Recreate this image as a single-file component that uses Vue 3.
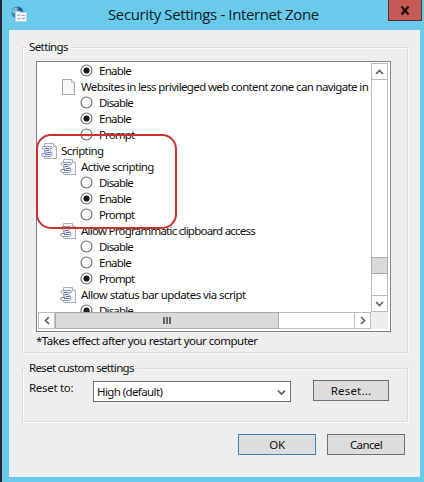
<template>
  <div class="window">
    <header class="titlebar">
      <svg class="app-icon" width="17" height="17" viewBox="0 0 17 17">
        <circle cx="6.500" cy="6.500" r="6" fill="#3c7ba2" />
        <path d="M1 5L3 2L6 1.500L6.500 4L4 6.500L2 8Z" fill="#8bbccb" />
        <path d="M8 1L11 3L10 5L8 4Z" fill="#1f5480" />
        <path d="M4.500 5.500H9L10 6.500H15.500V15.500H4.500Z" fill="#f0f6fa" stroke="#b5d3e3" />
        <path d="M6.500 9L7.500 10L9 8.200M6.500 12.500L7.500 13.500L9 11.700" fill="none" stroke="#5b8fbd" />
        <path d="M10.500 9.500H14M10.500 12.500H14" stroke="#94abba" />
      </svg>
      <h1>Security Settings - Internet Zone</h1>
      <button class="close" aria-label="Close">
        <svg width="10" height="9" viewBox="0 0 10 9">
          <path d="M1.500 0.500L8.500 8.500M8.500 0.500L1.500 8.500" stroke="#1b0b0b" stroke-width="2.200" />
        </svg>
      </button>
    </header>

    <main class="client">
      <section class="group settings">
        <h2><span class="t-settings">Settings</span></h2>
        <div class="listbox">
          <div class="view">
            <div v-for="(row, i) in rows" :key="i" class="row" :class="row.type">
              <svg v-if="row.type === 'option'" class="radio" width="13" height="13" viewBox="0 0 13 13">
                <circle cx="6.500" cy="6.500" r="5.500" fill="#fff" stroke="#6c6c6c" stroke-width="1.100" />
                <circle v-if="selected[row.group] === row.text" cx="6.500" cy="6.500" r="3.100" fill="#1c1c1c" />
              </svg>
              <svg v-else-if="row.type === 'page'" class="icon" width="14" height="16" viewBox="0 0 14 16">
                <path d="M0.500 0.500H9.500L12.500 3.500V15.500H0.500Z" fill="#f8f8f8" stroke="#a3a3a3" />
                <path d="M9.500 0.500V3.500H12.500" fill="#fff" stroke="#b8b8b8" />
              </svg>
              <svg v-else class="icon" width="16" height="16" viewBox="0 0 16 16">
                <path d="M3.500 0.500H12.500L15.500 3.500V15.500H3.500Z" fill="#f7f7f7" stroke="#b0b0b0" />
                <path d="M12.500 0.500V3.500H15.500" fill="#fff" stroke="#b0b0b0" />
                <path d="M3 3.500C0.500 3.500 0.500 6 2.500 6.500C4 8 4.500 9 5 10.500H1C0 12.500 1.500 13.500 3 13.500H9.500C11.500 13 11 10.500 10 9C8.500 7.500 8 6.500 9.500 5.500H11C11.500 4 10.500 3.500 10 3.500Z" fill="#e9edf7" stroke="#8590ae" stroke-width="0.900" />
                <path d="M3.500 5.500H8M4.500 7.500H8M6 9.500H9.500M4 11.500H9.500" stroke="#4a66a8" stroke-width="0.900" />
              </svg>
              <button v-if="row.type === 'option'" @click="selected[row.group] = row.text">
                <span :class="row.cls">{{ row.text }}</span>
              </button>
              <span v-else :class="row.cls">{{ row.text }}</span>
            </div>
          </div>
          <div class="vscroll">
            <span class="arrow"><svg width="9" height="6" viewBox="0 0 9 6"><path d="M1 5L4.500 1.500L8 5" /></svg></span>
            <span class="v-track"></span>
            <span class="v-thumb"></span>
            <span class="v-rest"></span>
            <span class="arrow"><svg width="9" height="6" viewBox="0 0 9 6"><path d="M1 1L4.500 4.500L8 1" /></svg></span>
          </div>
          <div class="hscroll">
            <span class="arrow"><svg width="6" height="9" viewBox="0 0 6 9"><path d="M5 1L1.500 4.500L5 8" /></svg></span>
            <span class="h-thumb"><i></i><i></i><i></i></span>
            <span class="h-track"></span>
            <span class="arrow"><svg width="6" height="9" viewBox="0 0 6 9"><path d="M1 1L4.500 4.500L1 8" /></svg></span>
          </div>
          <span class="corner"></span>
        </div>
        <p class="note"><span class="t-note">*Takes effect after you restart your computer</span></p>
        <div class="marker"></div>
      </section>

      <section class="group reset">
        <h2><span class="t-custom">Reset custom settings</span></h2>
        <div class="reset-row">
          <label><span class="t-to">Reset to:</span></label>
          <div class="select">
            <span class="t-high">High (default)</span>
            <svg width="9" height="7" viewBox="0 0 9 7"><path d="M1 1.500L4.500 5L8 1.500" /></svg>
          </div>
          <button class="btn"><span class="t-reset">Reset...</span></button>
        </div>
      </section>

      <footer>
        <button class="btn ok">OK</button>
        <button class="btn"><span class="t-cancel">Cancel</span></button>
      </footer>
    </main>
  </div>
</template>

<script setup>
import { reactive } from 'vue';

const option = (text, group) => ({
  type: 'option',
  text,
  group,
  cls: 't-' + text.toLowerCase(),
});

const rows = [
  option('Enable', 'first'),
  { type: 'page', text: 'Websites in less privileged web content zone can navigate in', cls: 't-websites' },
  option('Disable', 'websites'),
  option('Enable', 'websites'),
  option('Prompt', 'websites'),
  { type: 'category', text: 'Scripting', cls: 't-scripting' },
  { type: 'script', text: 'Active scripting', cls: 't-active' },
  option('Disable', 'active'),
  option('Enable', 'active'),
  option('Prompt', 'active'),
  { type: 'script', text: 'Allow Programmatic clipboard access', cls: 't-clipboard' },
  option('Disable', 'clipboard'),
  option('Enable', 'clipboard'),
  option('Prompt', 'clipboard'),
  { type: 'script', text: 'Allow status bar updates via script', cls: 't-status' },
  option('Disable', 'status'),
];

// selected option of each setting
const selected = reactive({
  first: 'Enable',
  websites: 'Enable',
  active: 'Enable',
  clipboard: 'Prompt',
  status: 'Disable',
});
</script>

<style>
body {
  margin: 0;
  overflow: hidden;
}
</style>

<style scoped>
* {
  box-sizing: border-box;
}

.window {
  width: 424px;
  height: 482px;
  padding: 0 4px 5px 7px;
  border-left: 2px solid #30232f;
  background: #69cbe9;
  color: #111;
  font: 11.5px/16px "Noto Sans", "Open Sans", sans-serif;
  letter-spacing: -0.3px;
}

.titlebar {
  display: flex;
  height: 30px;
  margin-right: -2px;
}

.app-icon {
  margin: 6px 0 0 2px;
}

h1 {
  flex: 1;
  margin: 0;
  padding: 0 0 0 80px;
  font: 15px/29px "Open Sans", sans-serif;
  letter-spacing: -0.38px;
  color: #0d1b2c;
  white-space: nowrap;
}

button {
  padding: 0;
  border: 0;
  background: none;
  color: inherit;
  font: inherit;
  letter-spacing: inherit;
}

.close {
  display: flex;
  align-items: center;
  justify-content: center;
  width: 34px;
  height: 21px;
  border: 1px solid #4b2f3c;
  border-top: 0;
  background: #c65a55;
}

.client {
  height: 447px;
  padding: 17px 12px 0 13px;
  background: #eee;
}

.group {
  position: relative;
  border: 1px solid #dcdcdc;
  box-shadow: inset 1px 1px #fafafa, 1px 1px #fafafa;
}

h2 {
  display: flex;
  width: max-content;
  height: 16px;
  margin: -9px 0 0 3px;
  padding: 0 3px;
  background: #eee;
  font: inherit;
}

.settings {
  height: 306px;
  padding: 0 16px 0 13px;
}

.settings h2 {
  margin-left: -10px;
}

.listbox {
  display: grid;
  grid-template: 249px 17px / 333px 17px;
  width: 355px;
  height: 271px;
  margin-top: 6px;
  padding: 1px;
  border: 1px solid #828282;
  background: #fff;
}

.view {
  overflow: hidden;
}

.row {
  display: flex;
  align-items: center;
  height: 16px;
  white-space: nowrap;
}

.option {
  padding-left: 42px;
}

.option button {
  margin-left: 6px;
}

.radio,
.icon {
  flex: none;
}

.radio {
  margin-top: -1px;
}

.page {
  padding-left: 24px;
}

.page .icon {
  margin-right: 5px;
}

.category {
  padding-left: 3px;
}

.category .icon,
.script .icon {
  margin-right: 4px;
}

.script {
  padding-left: 22px;
}

.script .icon {
  margin-right: 5px;
}

/* tracking per label */
.t-settings {
  letter-spacing: -0.6px;
}

.t-enable {
  letter-spacing: -0.75px;
}

.t-disable,
.t-prompt {
  letter-spacing: -0.85px;
}

.t-websites {
  letter-spacing: -0.64px;
}

.t-scripting {
  letter-spacing: -0.6px;
}

.t-active {
  letter-spacing: -0.6px;
}

.t-clipboard {
  letter-spacing: -0.76px;
}

.t-status {
  letter-spacing: -0.56px;
}

.t-note {
  letter-spacing: -0.5px;
}

.t-custom {
  letter-spacing: -0.66px;
}

.t-high {
  letter-spacing: -0.6px;
}

.t-reset {
  letter-spacing: 0.2px;
}

.t-cancel {
  letter-spacing: -0.6px;
}

.arrow {
  display: flex;
  align-items: center;
  justify-content: center;
  flex: 0 0 17px;
  border: 1px solid #bcbcbc;
  background: #fff;
}

.arrow path,
.select path {
  fill: none;
  stroke: #606060;
  stroke-width: 1.7;
}

.vscroll {
  display: flex;
  flex-direction: column;
}

.v-track {
  flex: 1;
  border: solid #bcbcbc;
  border-width: 0 1px;
}

.v-thumb {
  height: 17px;
  border: 1px solid #aaa;
  background: #dadada;
}

.v-rest {
  height: 21px;
  border: solid #bcbcbc;
  border-width: 0 1px;
}

.hscroll {
  display: flex;
}

.h-thumb {
  display: flex;
  align-items: center;
  justify-content: center;
  gap: 1px;
  width: 224px;
  border: 1px solid #aaa;
  background: #dadada;
}

.h-thumb i {
  width: 2px;
  height: 7px;
  background: #666;
}

.h-track {
  flex: 1;
  border: solid #bcbcbc;
  border-width: 1px 0;
}

.corner {
  background: #eee;
}

.note {
  margin: 1px 0 0;
  white-space: nowrap;
}

/* red outline drawn over the scripting rows */
.marker {
  position: absolute;
  left: 13px;
  top: 86px;
  width: 141px;
  height: 95px;
  border: 2px solid #cc3030;
  border-radius: 15px;
  pointer-events: none;
}

.reset {
  height: 54px;
  margin-top: 15px;
}

.reset-row {
  display: flex;
  align-items: flex-start;
  padding: 4px 0 0 6px;
}

label {
  width: 64px;
  white-space: nowrap;
}

.select {
  display: flex;
  align-items: center;
  justify-content: space-between;
  width: 198px;
  height: 21px;
  margin: 1px 22px 0 0;
  padding: 1px 4px 0 3px;
  border: 1px solid #707070;
  background: #fff;
}

.btn {
  display: flex;
  align-items: center;
  justify-content: center;
  width: 78px;
  height: 21px;
  border: 1px solid #707070;
  background: #ddd;
}

.reset .btn {
  width: 76px;
}

.ok {
  border-color: #3e84c0;
}

footer {
  display: flex;
  justify-content: flex-end;
  gap: 11px;
  padding: 12px 3px 0 0;
}
</style>
